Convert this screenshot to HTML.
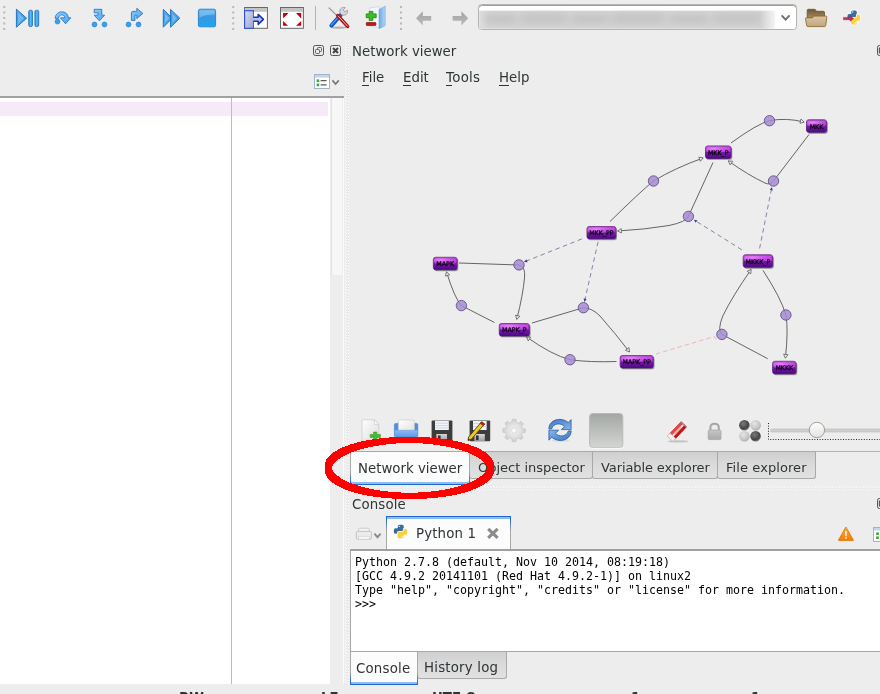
<!DOCTYPE html>
<html>
<head>
<meta charset="utf-8">
<title>Network viewer</title>
<style>
html,body{margin:0;padding:0;background:#ededed;}
body{width:880px;height:694px;overflow:hidden;background:#ededed;position:relative;font-family:"DejaVu Sans","Liberation Sans",sans-serif;font-size:13.33px;color:#2e3436;}
.abs{position:absolute;}
.t{will-change:transform;position:absolute;white-space:nowrap;line-height:16px;height:16px;}
.t u{text-decoration:none;border-bottom:1px solid #2e3436;padding-bottom:0px;}
.sv{font-weight:bold;}
.tab{position:absolute;box-sizing:border-box;border:1px solid #a9a9a9;border-top-color:#aaa;background:linear-gradient(#cfcfcf,#dadada 45%,#e1e1e1);}
.tab.on{background:#fcfcfc;border-color:#a9a9a9;}
#ed{left:0;top:98px;width:330px;height:586px;background:#fff;}
#edtop{left:0;top:96px;width:344px;height:2px;background:#a1a1a1;}
#hl{left:0;top:102px;width:328px;height:14px;background:#f6e9f8;}
#edge{left:231px;top:98px;width:1px;height:586px;background:#bdbdbd;}
#sf{left:331px;top:98px;width:11px;height:177px;background:#f7f7f7;border-left:1px solid #e2e2e2;box-sizing:border-box}
#con{left:350px;top:549px;width:540px;height:103px;background:#fff;border:1px solid #a8a8a8;border-top:2px solid #a0a0a0;box-sizing:border-box;}
#con pre{will-change:transform;margin:0;position:absolute;left:4px;top:4px;font-family:"DejaVu Sans Mono","Liberation Mono",monospace;font-size:11.63px;line-height:14px;color:#000;}
</style>
</head>
<body>
<!-- left editor pane -->
<div class="abs" id="edtop"></div>
<div class="abs" id="ed"></div>
<div class="abs" id="hl"></div>
<div class="abs" id="edge"></div>
<div class="abs" id="sf"></div>

<!-- titles and menus -->
<div class="t" style="left:352px;top:44px;">Network viewer</div>
<div class="t" style="left:362px;top:70px;"><u>F</u>ile</div>
<div class="t" style="left:403px;top:70px;"><u>E</u>dit</div>
<div class="t" style="left:446px;top:70px;letter-spacing:.3px"><u>T</u>ools</div>
<div class="t" style="left:499px;top:70px;"><u>H</u>elp</div>

<!-- dock tabs -->
<div class="abs" style="left:350px;top:451px;width:530px;height:1px;background:#b2b2b2"></div>
<div class="tab" style="left:469px;top:451px;width:124px;height:28px;border-radius:0 0 3px 3px"></div>
<div class="tab" style="left:592px;top:451px;width:126px;height:28px;border-radius:0 0 3px 3px"></div>
<div class="tab" style="left:717px;top:451px;width:99px;height:28px;border-radius:0 0 3px 3px"></div>
<div class="tab on" style="left:350px;top:451px;width:120px;height:34px;border-bottom:1px solid #1c6ad2;box-shadow:inset 0 -2px 0 #8fbcee;border-radius:0 0 3px 3px;border-image:linear-gradient(#a9a9a9 60%,#1c6ad2 95%) 1;"></div>
<div class="t" style="left:358px;top:461px;">Network viewer</div>
<div class="t" style="left:477.6px;top:460px;font-size:13px;letter-spacing:0px">Object inspector</div>
<div class="t" style="left:600.5px;top:460px;font-size:13px;letter-spacing:-.1px">Variable explorer</div>
<div class="t" style="left:725.8px;top:460px;font-size:13px;letter-spacing:.08px">File explorer</div>

<!-- console -->
<div class="t" style="left:352px;top:497px;letter-spacing:.15px">Console</div>
<div class="tab on" style="left:386px;top:516px;width:125px;height:34px;border-top:1px solid #1c6ad2;border-bottom:none;box-shadow:inset 0 2px 0 #8fbcee;border-image:linear-gradient(#1c6ad2 8%,#a9a9a9 45%) 1;"></div>
<div class="t" style="left:415.8px;top:526px;letter-spacing:.15px">Python 1</div>
<div class="abs" id="con"><pre>Python 2.7.8 (default, Nov 10 2014, 08:19:18)
[GCC 4.9.2 20141101 (Red Hat 4.9.2-1)] on linux2
Type "help", "copyright", "credits" or "license" for more information.
&gt;&gt;&gt; </pre></div>
<div class="tab" style="left:417px;top:651px;width:89.5px;height:28px;border-radius:0 0 3px 3px"></div>
<div class="tab on" style="left:350px;top:652px;width:68px;height:33px;border-top:none;border-bottom:1px solid #1c6ad2;box-shadow:inset 0 -2px 0 #8fbcee;border-image:linear-gradient(#a9a9a9 60%,#1c6ad2 95%) 1;"></div>
<div class="t" style="left:356.4px;top:661px;letter-spacing:.2px">Console</div>
<div class="t" style="left:424.4px;top:660px;letter-spacing:.2px">History log</div>

<!-- status bar -->
<div class="t sl" style="left:96px;top:694px;">Permissions:</div><div class="t sv" style="left:179px;top:690px;">RW</div>
<div class="t sl" style="left:236px;top:694px;">End-of-lines:</div><div class="t sv" style="left:321px;top:690px;">LF</div>
<div class="t sl" style="left:372px;top:694px;">Encoding:</div><div class="t sv" style="left:432px;top:690px;">UTF-8</div>
<div class="t sl" style="left:598px;top:694px;">Line:</div><div class="t sv" style="left:631px;top:690px;">1</div>
<div class="t sl" style="left:694px;top:694px;">Column:</div><div class="t sv" style="left:751px;top:690px;">1</div>

<!-- SVG overlay: splitters, icons, graph -->
<svg class="abs" id="ov" style="left:0;top:0;will-change:transform" width="880" height="694" viewBox="0 0 880 694">
<defs>
<marker id="ao" viewBox="0 0 7 7" markerWidth="7" markerHeight="7" refX="4.6" refY="3.5" orient="auto" markerUnits="userSpaceOnUse"><path d="M1,1.3 L4.8,3.5 L1,5.7 Z" fill="#ededed" stroke="#555" stroke-width="0.7"/></marker>
<marker id="ab" viewBox="0 0 6 6" markerWidth="4.2" markerHeight="4.2" refX="4.5" refY="3" orient="auto" markerUnits="userSpaceOnUse"><path d="M0.5,0.8 L5.2,3 L0.5,5.2 Z" fill="#3b3b96" stroke="none"/></marker>
<linearGradient id="ng" x1="0" y1="0" x2="0" y2="1"><stop offset="0" stop-color="#c34fe2"/><stop offset=".46" stop-color="#a92fd2"/><stop offset=".52" stop-color="#7c18b2"/><stop offset="1" stop-color="#4b0a82"/></linearGradient>
<radialGradient id="nh" cx=".3" cy=".35" r=".6"><stop offset="0" stop-color="#ee8cff" stop-opacity=".9"/><stop offset="1" stop-color="#d25fee" stop-opacity=".35"/></radialGradient>
<linearGradient id="bl" x1="0" y1="0" x2="0" y2="1"><stop offset="0" stop-color="#62b0ee"/><stop offset=".5" stop-color="#4299e4"/><stop offset="1" stop-color="#4cbcf9"/></linearGradient>
<linearGradient id="blv" x1="0" y1="0" x2="1" y2="0"><stop offset="0" stop-color="#2f86d8"/><stop offset=".5" stop-color="#56c2fa"/><stop offset="1" stop-color="#2f86d8"/></linearGradient>
<linearGradient id="stp" x1="0" y1="0" x2="0" y2="1"><stop offset="0" stop-color="#5cb2f0"/><stop offset=".45" stop-color="#3a96de"/><stop offset="1" stop-color="#19a8f8"/></linearGradient>
<linearGradient id="pnl" x1="0" y1="0" x2="1" y2="1"><stop offset="0" stop-color="#d4daee"/><stop offset="1" stop-color="#9aa3cf"/></linearGradient>
<linearGradient id="fld" x1="0" y1="0" x2="1" y2="0"><stop offset="0" stop-color="#6fa8e4"/><stop offset="1" stop-color="#b4d6f8"/></linearGradient>
<linearGradient id="gry" x1="0" y1="0" x2="0" y2="1"><stop offset="0" stop-color="#a2a2a2"/><stop offset="1" stop-color="#bcbcbc"/></linearGradient>
<linearGradient id="tan" x1="0" y1="0" x2="0" y2="1"><stop offset="0" stop-color="#d8c6a4"/><stop offset="1" stop-color="#bfa780"/></linearGradient>
<linearGradient id="blur" x1="0" y1="0" x2="1" y2="0"><stop offset="0" stop-color="#dedede"/><stop offset=".03" stop-color="#d3d3d3"/><stop offset=".95" stop-color="#d3d3d3"/><stop offset="1" stop-color="#f4f4f4"/></linearGradient>
<filter id="bf" x="-10%" y="-50%" width="120%" height="200%"><feGaussianBlur stdDeviation="4 2.5"/></filter>
<pattern id="dots" x="345" y="40" width="4" height="3" patternUnits="userSpaceOnUse"><rect width="4" height="3" fill="#ebebeb"/><rect x="0" y="0" width="1" height="1" fill="#fcfcfc"/><rect x="1" y="1" width="1" height="1" fill="#fcfcfc"/><rect x="3" y="1" width="1" height="1" fill="#fcfcfc"/></pattern>
<pattern id="dotsh" x="349" y="486" width="3" height="4" patternUnits="userSpaceOnUse"><rect width="3" height="4" fill="#ebebeb"/><rect x="0" y="0" width="1" height="1" fill="#fcfcfc"/><rect x="1" y="1" width="1" height="1" fill="#fcfcfc"/><rect x="1" y="3" width="1" height="1" fill="#fcfcfc"/></pattern>
<linearGradient id="wrn" x1="0" y1="0" x2="0" y2="1"><stop offset="0" stop-color="#fbb040"/><stop offset="1" stop-color="#f57900"/></linearGradient>
<linearGradient id="ppr" x1="0" y1="0" x2="1" y2="1"><stop offset="0" stop-color="#fdfdfd"/><stop offset="1" stop-color="#dedede"/></linearGradient>
<linearGradient id="ppr2" x1="0" y1="0" x2="1" y2="1"><stop offset="0" stop-color="#ffffff"/><stop offset="1" stop-color="#e4e4e4"/></linearGradient>
<linearGradient id="prb" x1="0" y1="0" x2="0" y2="1"><stop offset="0" stop-color="#8cb8f4"/><stop offset="1" stop-color="#5d9be9"/></linearGradient>
<linearGradient id="mtl" x1="0" y1="0" x2="0" y2="1"><stop offset="0" stop-color="#d8d8d8"/><stop offset="1" stop-color="#9c9c9c"/></linearGradient>
<radialGradient id="ggr" cx="0" cy="0" r="11.5" gradientUnits="userSpaceOnUse"><stop offset="0" stop-color="#f2f2f2"/><stop offset=".6" stop-color="#e0e0e0"/><stop offset="1" stop-color="#cdcdcd"/></radialGradient>
<linearGradient id="rf1" x1="0" y1="0" x2="1" y2="1"><stop offset="0" stop-color="#3f78c4"/><stop offset=".5" stop-color="#5f95d6"/><stop offset="1" stop-color="#8db6e6"/></linearGradient>
<linearGradient id="gbt" x1="0" y1="0" x2="0" y2="1"><stop offset="0" stop-color="#a3a7a3"/><stop offset="1" stop-color="#d3d5d3"/></linearGradient>
<linearGradient id="lck" x1="0" y1="0" x2="0" y2="1"><stop offset="0" stop-color="#c6c6c6"/><stop offset="1" stop-color="#a9a9a9"/></linearGradient>
<radialGradient id="bdk" cx=".4" cy=".35" r=".7"><stop offset="0" stop-color="#7a7a7a"/><stop offset=".7" stop-color="#444"/><stop offset="1" stop-color="#8a8a8a"/></radialGradient>
<radialGradient id="blt" cx=".4" cy=".35" r=".7"><stop offset="0" stop-color="#e6e6e6"/><stop offset=".7" stop-color="#c4c4c4"/><stop offset="1" stop-color="#a8a8a8"/></radialGradient>
<linearGradient id="knb" x1="0" y1="0" x2="0" y2="1"><stop offset="0" stop-color="#ffffff"/><stop offset="1" stop-color="#e2e2e0"/></linearGradient>
<linearGradient id="bl2" x1="0" y1="0" x2="1" y2="1"><stop offset="0" stop-color="#8ccefa"/><stop offset="1" stop-color="#4aa4ee"/></linearGradient>
<linearGradient id="fbk" x1="0" y1="0" x2="0" y2="1"><stop offset="0" stop-color="#6e5632"/><stop offset="1" stop-color="#a38c62"/></linearGradient>
</defs>
<!--GRAPH-->
<g id="graph" fill="none" stroke="#555" stroke-width="0.9">
<g stroke="#77779f" stroke-dasharray="4.5 3.5">
<path d="M759.6,248.4 L771.8,187.5" marker-end="url(#ab)"/>
<path d="M741.8,249.8 L694.2,220" marker-end="url(#ab)"/>
<path d="M581.9,238.9 L524.4,261.8" marker-end="url(#ab)"/>
<path d="M598.1,241.8 L584.5,301.5" marker-end="url(#ab)"/>
</g>
<path d="M656,354 L714.5,336.5 l1.8,3.2" stroke="#f3aaaa" stroke-dasharray="4.5 3"/>
<path d="M610,221.5 Q640,192 653.5,181 Q675,168 703,158" marker-end="url(#ao)"/>
<path d="M731,143 Q757,124 769.5,120.7 Q786,117.5 804,122" marker-end="url(#ao)"/>
<path d="M809,134.5 L773.5,181 Q770,185.5 765,183 Q748,175 728.5,161" marker-end="url(#ao)"/>
<path d="M713,162.5 L688.4,216.4 Q686,222 669,225.5 Q645,229.5 617.8,231" marker-end="url(#ao)"/>
<path d="M459,263 L519,265 Q525.5,266.5 524.6,277 Q523,295 516.8,319.2" marker-end="url(#ao)"/>
<path d="M494.5,322.5 L461.4,305.6 Q455,299 446.5,272" marker-end="url(#ao)"/>
<path d="M532,323 L583.4,307.7 Q592,308 600,316 Q615,333 629.4,351.8" marker-end="url(#ao)"/>
<path d="M616.5,361.5 Q590,362.5 570,359.7 Q552,355 526.6,337" marker-end="url(#ao)"/>
<path d="M763,270.4 Q781,298 785.9,315 Q788.5,330 785.4,358" marker-end="url(#ao)"/>
<path d="M767.7,358.7 L722,334.4 Q717,330 722.9,315.8 Q732,297 751,269.6" marker-end="url(#ao)"/>
<g fill="#a78bd2" fill-opacity="0.85" stroke="#62528a" stroke-width="0.9">
<circle cx="769.5" cy="120.7" r="5.2"/><circle cx="653.5" cy="181" r="5.2"/><circle cx="773.5" cy="181" r="5.2"/><circle cx="688.4" cy="216.4" r="5.2"/>
<circle cx="519" cy="264.9" r="5.2"/><circle cx="461.4" cy="305.6" r="5.2"/><circle cx="583.4" cy="307.7" r="5.2"/><circle cx="570" cy="359.7" r="5.2"/>
<circle cx="785.9" cy="315" r="5.2"/><circle cx="721.9" cy="334.4" r="5.2"/>
</g>
</g>
<g id="nodes" font-family="'DejaVu Sans','Liberation Sans',sans-serif" font-size="6.3" text-anchor="middle" fill="#0c0212" stroke="#0c0212" stroke-width=".28" paint-order="stroke">
<g transform="translate(806.5,119.8)"><rect x="1" y="1.2" width="20" height="12.4" rx="2.2" fill="#6b6b6b" opacity=".75"/><rect width="20" height="12.4" rx="2.2" fill="url(#ng)" stroke="#47105f" stroke-width=".8"/><rect x=".6" y=".6" width="18.8" height="6" rx="1.8" fill="url(#nh)"/><text x="10" y="8.8">MKK</text></g>
<g transform="translate(705.5,146.0)"><rect x="1" y="1.2" width="25.5" height="12.4" rx="2.2" fill="#6b6b6b" opacity=".75"/><rect width="25.5" height="12.4" rx="2.2" fill="url(#ng)" stroke="#47105f" stroke-width=".8"/><rect x=".6" y=".6" width="24.3" height="6" rx="1.8" fill="url(#nh)"/><text x="12.7" y="8.8">MKK_P</text></g>
<g transform="translate(587,226.5)"><rect x="1" y="1.2" width="28.8" height="12.2" rx="2.2" fill="#6b6b6b" opacity=".75"/><rect width="28.8" height="12.2" rx="2.2" fill="url(#ng)" stroke="#47105f" stroke-width=".8"/><rect x=".6" y=".6" width="27.6" height="5.8" rx="1.8" fill="url(#nh)"/><text x="14.4" y="8.8">MKK_PP</text></g>
<g transform="translate(743.2,254.8)"><rect x="1" y="1.2" width="29.4" height="12.4" rx="2.2" fill="#6b6b6b" opacity=".75"/><rect width="29.4" height="12.4" rx="2.2" fill="url(#ng)" stroke="#47105f" stroke-width=".8"/><rect x=".6" y=".6" width="28.2" height="6" rx="1.8" fill="url(#nh)"/><text x="14.7" y="8.8">MKKK_P</text></g>
<g transform="translate(772.6,361.3)"><rect x="1" y="1.2" width="23.4" height="12.4" rx="2.2" fill="#6b6b6b" opacity=".75"/><rect width="23.4" height="12.4" rx="2.2" fill="url(#ng)" stroke="#47105f" stroke-width=".8"/><rect x=".6" y=".6" width="22.2" height="6" rx="1.8" fill="url(#nh)"/><text x="11.7" y="8.8">MKKK</text></g>
<g transform="translate(433.4,257.3)"><rect x="1" y="1.2" width="23.6" height="12.4" rx="2.2" fill="#6b6b6b" opacity=".75"/><rect width="23.6" height="12.4" rx="2.2" fill="url(#ng)" stroke="#47105f" stroke-width=".8"/><rect x=".6" y=".6" width="22.4" height="6" rx="1.8" fill="url(#nh)"/><text x="11.8" y="8.8">MAPK</text></g>
<g transform="translate(499.3,323.5)"><rect x="1" y="1.2" width="30" height="12.4" rx="2.2" fill="#6b6b6b" opacity=".75"/><rect width="30" height="12.4" rx="2.2" fill="url(#ng)" stroke="#47105f" stroke-width=".8"/><rect x=".6" y=".6" width="28.8" height="6" rx="1.8" fill="url(#nh)"/><text x="15" y="8.8">MAPK_P</text></g>
<g transform="translate(620.2,355.5)"><rect x="1" y="1.2" width="33" height="12.4" rx="2.2" fill="#6b6b6b" opacity=".75"/><rect width="33" height="12.4" rx="2.2" fill="url(#ng)" stroke="#47105f" stroke-width=".8"/><rect x=".6" y=".6" width="31.8" height="6" rx="1.8" fill="url(#nh)"/><text x="16.5" y="8.8">MAPK_PP</text></g>
</g>
<!--/GRAPH-->
<!--ICONS-->
<g id="tb-top">
<!-- toolbar handles -->
<g fill="#bab8b0"><rect x="3.2" y="6" width="2" height="2"/><rect x="3.2" y="11.5" width="2" height="2"/><rect x="3.2" y="17" width="2" height="2"/><rect x="3.2" y="22.5" width="2" height="2"/><rect x="3.2" y="28" width="2" height="2"/>
<rect x="232.2" y="6" width="2" height="2"/><rect x="232.2" y="11.5" width="2" height="2"/><rect x="232.2" y="17" width="2" height="2"/><rect x="232.2" y="22.5" width="2" height="2"/><rect x="232.2" y="28" width="2" height="2"/>
<rect x="400" y="6" width="2" height="2"/><rect x="400" y="11.5" width="2" height="2"/><rect x="400" y="17" width="2" height="2"/><rect x="400" y="22.5" width="2" height="2"/><rect x="400" y="28" width="2" height="2"/></g>
<!-- debug play/pause -->
<path d="M16.4,9.2 L26.6,18.2 L16.4,27.2 Z" fill="url(#bl)" stroke="#2670be" stroke-width="1" stroke-linejoin="round"/>
<path d="M18.2,13 L24,18.2 L18.2,23.4 Z" fill="#7ccaf8" opacity=".7"/>
<rect x="28.7" y="10.2" width="3.8" height="16.4" rx="1.5" fill="url(#blv)" stroke="#2670be" stroke-width=".8"/>
<rect x="34.9" y="10.2" width="3.8" height="16.4" rx="1.5" fill="url(#blv)" stroke="#2670be" stroke-width=".8"/>
<!-- step over -->
<path d="M55.2,18.4 C55.4,10 67.6,9.6 68.4,17.8 L70.8,17.8 L65.6,23.8 L60.4,17.8 L64.8,17.8 C64.4,13.6 58.6,14 58.4,18.4 Z" fill="url(#bl2)" stroke="#2a76c6" stroke-width=".9" stroke-linejoin="round"/>
<circle cx="57.5" cy="21.6" r="2.4" fill="#33a5f2" stroke="#2a78c4" stroke-width=".7"/>
<!-- step into -->
<path d="M94.2,9.3 L101.8,9.3 L101.8,15.2 L104.6,15.2 L99.4,20.8 L94.2,15.2 L98,15.2 L98,12.8 L94.2,12.8 Z" fill="url(#bl2)" stroke="#2a76c6" stroke-width=".9" stroke-linejoin="round"/>
<circle cx="94.5" cy="24.5" r="2.4" fill="#2ea6f5" stroke="#2a78c4" stroke-width=".7"/><circle cx="104.5" cy="24.5" r="2.4" fill="#2ea6f5" stroke="#2a78c4" stroke-width=".7"/>
<!-- step out -->
<path d="M131.4,20.4 L131.4,13 Q131.4,11.4 133,11.4 L136.8,11.4 L136.8,8.3 L142.9,13.4 L136.8,18.6 L136.8,15.2 L135,15.2 L135,20.4 Z" fill="url(#bl2)" stroke="#2a76c6" stroke-width=".9" stroke-linejoin="round"/>
<circle cx="128.5" cy="24.5" r="2.4" fill="#2ea6f5" stroke="#2a78c4" stroke-width=".7"/><circle cx="138.5" cy="24.5" r="2.4" fill="#2ea6f5" stroke="#2a78c4" stroke-width=".7"/>
<!-- continue -->
<path d="M163.3,9.4 L172.2,18.2 L163.3,27.2 Z" fill="url(#bl)" stroke="#2670be" stroke-width="1" stroke-linejoin="round"/>
<path d="M170.6,9.4 L179.8,18.2 L170.6,27.2 Z" fill="url(#bl)" stroke="#2670be" stroke-width="1" stroke-linejoin="round"/>
<path d="M165,14 L169.4,18.2 L165,22.6 Z M172.4,14 L176.8,18.2 L172.4,22.6 Z" fill="#8fd3fa" opacity=".6"/>
<!-- stop -->
<rect x="198.4" y="9.2" width="17.2" height="17.6" rx="1.6" fill="url(#stp)" stroke="#2d7ccb" stroke-width=".9"/>
<path d="M199.4,17.5 Q206,14.2 214.6,14.6 L214.6,10.2 L199.4,10.2 Z" fill="#8fd0f8" opacity=".55"/>
<!-- window w/ arrow -->
<rect x="244.6" y="7.5" width="22.8" height="20.8" fill="#fff" stroke="#666" stroke-width="1"/>
<rect x="245.1" y="8" width="21.8" height="3.8" fill="#c4c4c4"/>
<rect x="244.6" y="10.7" width="8.8" height="17.6" fill="url(#pnl)" stroke="#2b4fe0" stroke-width="1.1"/>
<path d="M252.8,17.3 L258.2,17.3 L258.2,14.4 L263.4,19.4 L258.2,24.4 L258.2,21.3 L252.8,21.3" fill="#b9c0e4" stroke="#1634b6" stroke-width="1.5" stroke-linejoin="round"/>
<rect x="246" y="12" width="7.2" height="15.2" fill="url(#pnl)"/>
<!-- fullscreen -->
<rect x="280.5" y="7.5" width="22.9" height="20.8" fill="#fff" stroke="#666" stroke-width="1"/>
<rect x="281" y="8" width="21.9" height="3.8" fill="#c4c4c4"/>
<path d="M283.1,13 L288.5,13 L283.1,18.5 Z M296,13 L301.2,13 L301.2,18.5 Z M283.1,20.9 L283.1,25.8 L288,25.8 Z M301.2,20.9 L301.2,25.8 L296,25.8 Z" fill="#c40000"/>
<!-- separator -->
<rect x="315" y="6" width="1" height="24" fill="#b4b4b4"/>
<!-- tools -->
<ellipse cx="339" cy="27.6" rx="7.5" ry="1.1" fill="#9a9a9a" opacity=".7"/>
<path d="M329.3,8 L337.6,16" stroke="#8a8a8a" stroke-width="1.6" stroke-linecap="round"/>
<path d="M329.3,7.6 L337.6,15.6" stroke="#e8e8e8" stroke-width=".7" stroke-linecap="round"/>
<path d="M340.6,15.2 L331.4,25.6" stroke="#0c52c8" stroke-width="4" stroke-linecap="round"/>
<path d="M340,15.4 L331.4,25" stroke="#4c97f0" stroke-width="1.4" stroke-linecap="round"/>
<path d="M337.8,15.6 L347.6,26.4" stroke="#b40c0c" stroke-width="3.6" stroke-linecap="round"/>
<path d="M338.2,16 L347.4,26" stroke="#f6d0d0" stroke-width=".9" stroke-linecap="round"/>
<path d="M340.6,13.8 C338.2,10.2 341.4,6.4 345.2,7.6 L343.2,10 L344.8,11.8 L347.6,10.2 C348.4,14 344.4,16.4 341.8,14.8 Z" fill="#d8d8d8" stroke="#8c8c8c" stroke-width=".7"/>
<!-- folder plus/minus -->
<path d="M369.6,7.8 L379.8,6.8 L379.8,27.6 L369.6,26.2 Z" fill="#f2f6fb" stroke="#c3cdd8" stroke-width=".6"/>
<path d="M379,9.4 L385.2,6.2 L385.2,25.6 L379,28.8 Z" fill="url(#fld)" stroke="#76a8dc" stroke-width=".6"/>
<path d="M369.2,13.4 L369.2,11.4 L372.8,11.4 L372.8,13.9 L376.2,13.9 L376.2,17.7 L372.8,17.7 L372.8,20.4 L369.2,20.4 L369.2,17.7 L366.2,17.7 L366.2,13.9 L369.2,13.9 Z" fill="#3bbd27" stroke="#1f7d12" stroke-width=".8" stroke-linejoin="round"/>
<rect x="366.3" y="22.5" width="9.6" height="3" rx=".6" fill="#c8141a" stroke="#861010" stroke-width=".7"/>
<!-- back / forward -->
<path d="M416,18.2 L422.8,11.2 L422.8,16 L431.2,16 L431.2,20.8 L422.8,20.8 L422.8,25.4 Z" fill="url(#gry)"/>
<path d="M468.2,18.2 L461.4,11.2 L461.4,16 L452.6,16 L452.6,20.8 L461.4,20.8 L461.4,25.4 Z" fill="url(#gry)"/>
<!-- combobox -->
<rect x="478.5" y="4.5" width="318" height="25" rx="3" fill="#fff" stroke="#b6b2ad" stroke-width="1"/>
<path d="M479.5,7.5 Q479.5,5.5 481.5,5.5 L793.5,5.5 Q795.5,5.5 795.5,7.5" fill="none" stroke="#9e9e9e" stroke-width="1"/>
<rect x="479.2" y="10.7" width="296" height="18" fill="url(#blur)"/>
<g filter="url(#bf)" fill="#c2c2c2" opacity=".75"><rect x="486" y="14" width="30" height="10"/><rect x="522" y="13" width="44" height="11"/><rect x="572" y="14" width="36" height="10"/><rect x="612" y="13" width="52" height="11"/><rect x="670" y="14" width="38" height="10"/><rect x="714" y="13" width="46" height="11"/></g>
<path d="M781.6,15.4 L785.6,19.6 L789.6,15.4" fill="none" stroke="#6e6e6e" stroke-width="1.9"/>
<!-- open folder -->
<path d="M807.2,10.4 Q807.2,9.3 808.4,9.3 L814.4,9.3 Q815.4,9.3 815.8,10.2 L816.3,11.3 L823.3,11.3 Q824.5,11.3 824.5,12.5 L824.5,18 L807.2,18 Z" fill="url(#fbk)" stroke="#6b4f22" stroke-width=".8"/>
<path d="M805.5,18.9 Q805.3,17.8 806.5,17.8 L812.4,17.8 L814,16.1 L825.8,16.1 Q827,16.1 826.8,17.3 L825.7,25.6 Q825.5,26.6 824.3,26.6 L807.9,26.6 Q806.9,26.6 806.7,25.6 Z" fill="url(#tan)" stroke="#875f22" stroke-width=".8" stroke-linejoin="round"/>
<!-- python w/ arrow -->
<g id="pylogo"><g stroke="#fafafa" stroke-width="1.6" stroke-linejoin="round" paint-order="stroke">
<path d="M851.2,14 L851.2,12 Q851.2,10.4 852.8,10.4 L855.2,10.4 Q856.8,10.4 856.8,12 L856.8,15.6 Q856.8,17.2 855.2,17.2 L852.6,17.2 Q851,17.2 851,18.8 L851,19.8 L849,19.8 Q847.4,19.8 847.4,17.4 L847.4,16.4 Q847.4,14 849,14 Z" fill="#3a6c9f"/>
<path d="M856.6,20.8 L856.6,23 Q856.6,24.6 855,24.6 L852.6,24.6 Q851,24.6 851,23 L851,19.4 Q851,17.8 852.6,17.8 L855.2,17.8 Q856.8,17.8 856.8,16.2 L856.8,14.8 L858.6,14.8 Q860.2,14.8 860.2,17.2 L860.2,18.4 Q860.2,20.8 858.6,20.8 Z" fill="#f7d23a"/>
</g>
<circle cx="852.7" cy="12" r=".7" fill="#e8eef5"/><circle cx="855.2" cy="23" r=".7" fill="#fff8d8"/></g>
<path d="M843.4,17.4 L850.2,17.4 L850.2,15.8 L853.6,18.6 L850.2,21.4 L850.2,19.8 L843.4,19.8 Z" fill="#b83260" stroke="#8f2448" stroke-width=".4"/>
</g>
<g id="misc">
<!-- splitters -->
<rect x="343" y="98" width="1" height="586" fill="#fbfbfb"/>
<rect x="345" y="40" width="4" height="645" fill="url(#dots)"/>
<rect x="349" y="486" width="531" height="4" fill="url(#dotsh)"/>
<!-- dock buttons (editor) -->
<g fill="none" stroke="#555753" stroke-width="1">
<rect x="313.5" y="45.5" width="10" height="10" rx="1.8"/>
<rect x="317.5" y="47.5" width="4" height="4" rx=".8" stroke-width=".9"/><rect x="315.5" y="49.5" width="4" height="4" rx=".8" fill="#ededed" stroke-width=".9"/>
<rect x="330.5" y="45.5" width="10" height="10" rx="1.8"/>
<path d="M333,48 L338,53 M338,48 L333,53" stroke-width="2" stroke="#444"/>
<rect x="877.5" y="45.5" width="10" height="10" rx="1.8"/><rect x="879.3" y="48" width="4" height="5" fill="#555"/>
<rect x="877.5" y="498.5" width="10" height="10" rx="1.8"/><rect x="879.3" y="501" width="4" height="5" fill="#555"/>
</g>
<!-- options icon (editor) -->
<rect x="314.5" y="74.5" width="15" height="14" fill="#fff" stroke="#9fb4cc" stroke-width="1"/>
<rect x="315" y="75" width="14" height="2.6" fill="#c6d6ea"/>
<rect x="316.6" y="79.4" width="2.6" height="2.6" fill="#3aa53a"/><rect x="316.6" y="83.6" width="2.6" height="2.6" fill="#3aa53a"/>
<rect x="320.6" y="80.2" width="6" height="1" fill="#333"/><rect x="320.6" y="84.4" width="6" height="1" fill="#333"/>
<path d="M332.4,80.4 L335.6,84 L338.8,80.4" fill="none" stroke="#777" stroke-width="1.6"/>
<!-- options icon (console, cut by edge) -->
<rect x="873.5" y="527.5" width="15" height="14" fill="#fff" stroke="#9fb4cc" stroke-width="1"/>
<rect x="874" y="528" width="14" height="2.6" fill="#c6d6ea"/>
<rect x="876.2" y="532.4" width="2.6" height="2.6" fill="#3aa53a"/><rect x="876.2" y="536.4" width="2.6" height="2.6" fill="#3aa53a"/>
<!-- warning -->
<path d="M845.9,527 L853.4,540 Q853.6,540.6 853,540.6 L838.9,540.6 Q838.3,540.6 838.5,540 Z" fill="url(#wrn)" stroke="#d6760a" stroke-width=".8" stroke-linejoin="round"/>
<rect x="845.2" y="531.2" width="1.5" height="5" fill="#fff"/><rect x="845.2" y="537.2" width="1.5" height="1.5" fill="#fff"/>
</g>
<g id="nvtb">
<!-- new doc -->
<path d="M362,419.8 L374.4,419.8 L378.8,424.6 L378.8,441 L362,441 Z" fill="url(#ppr)" stroke="#c9c9c9" stroke-width=".7"/>
<path d="M374.4,419.8 L374.4,424.6 L378.8,424.6 Z" fill="#fafafa" stroke="#c4c4c4" stroke-width=".6"/>
<path d="M373.6,432 L376.8,432 L376.8,434.4 L380.4,434.4 L380.4,437.4 L376.8,437.4 L376.8,440 L373.6,440 L373.6,437.4 L370.2,437.4 L370.2,434.4 L373.6,434.4 Z" fill="#47b82f" stroke="#3a9a27" stroke-width=".6"/>
<!-- print -->
<rect x="394.4" y="423.4" width="23.4" height="13.6" rx="1.4" fill="#4f8fe2" stroke="#3f7fd6" stroke-width=".6"/>
<rect x="394.8" y="430.4" width="22.6" height="6.4" fill="url(#prb)"/>
<path d="M398.4,421 Q398.4,420 399.4,420 L413.4,420 Q414.4,420 414.4,421 L414.4,430 L398.4,430 Z" fill="url(#ppr2)" stroke="#c8c8c8" stroke-width=".6"/>
<!-- save -->
<rect x="431.6" y="420.4" width="20.8" height="20.8" rx="1" fill="#3d3d3d"/>
<rect x="435" y="420.8" width="13.8" height="9.2" fill="#f2f5fa"/>
<rect x="435" y="422.6" width="13.8" height="1.1" fill="#cfdaea"/><rect x="435" y="425" width="13.8" height="1.1" fill="#cfdaea"/><rect x="435" y="427.4" width="13.8" height="1.1" fill="#cfdaea"/>
<rect x="436.4" y="434" width="10.6" height="7" fill="url(#mtl)"/><rect x="438" y="435.4" width="2.6" height="4.8" fill="#333"/>
<!-- save as -->
<rect x="469.6" y="420.6" width="20.6" height="20.6" rx="1" fill="#3d3d3d"/>
<rect x="473" y="421" width="13.6" height="9" fill="#f2f5fa"/><rect x="473" y="423" width="13.6" height="1.1" fill="#cfdaea"/><rect x="473" y="426" width="13.6" height="1.1" fill="#cfdaea"/>
<rect x="474.4" y="434" width="10.4" height="7" fill="url(#mtl)"/><rect x="476" y="435.4" width="2.6" height="4.8" fill="#333"/>
<path d="M481.6,421.8 L484.6,424 L471.4,439.2 L468,440.6 L468.6,437 Z" fill="#f0c81e" stroke="#3a3000" stroke-width=".8" stroke-linejoin="round"/>
<path d="M481.6,421.8 L484.6,424 L483.2,425.6 L480.2,423.4 Z" fill="#d2161e" stroke="#7a0d12" stroke-width=".5"/>
<path d="M468,440.6 L468.4,438.6 L469.8,439.8 Z" fill="#222"/>
<!-- gear (disabled) -->
<g transform="translate(514.1,430.5)" fill="url(#ggr)" stroke="#c4c4c4" stroke-width=".6">
<path d="M-1.9,-11.2 L1.9,-11.2 L2.5,-8.2 L4.6,-7.3 L7.1,-9 L9.4,-6.6 L7.6,-4.2 L8.4,-2.2 L11.3,-1.6 L11.3,1.8 L8.4,2.4 L7.5,4.5 L9.2,7 L6.8,9.3 L4.4,7.6 L2.4,8.4 L1.8,11.3 L-1.8,11.3 L-2.4,8.4 L-4.5,7.5 L-7,9.2 L-9.3,6.8 L-7.6,4.4 L-8.4,2.4 L-11.3,1.8 L-11.3,-1.8 L-8.4,-2.4 L-7.5,-4.5 L-9.2,-7 L-6.8,-9.3 L-4.4,-7.6 L-2.4,-8.4 Z"/>
<circle r="2.6" fill="#f8f8f8" stroke="#cfcfcf"/>
</g>
<!-- refresh -->
<ellipse cx="560.5" cy="440.6" rx="9" ry="1.2" fill="#d9d9d9"/>
<path id="rfa" d="M548.8,428.9 C549,421.4 556.6,418.4 562,419.6 C565,420.2 567,421.4 568.2,422.6 L571.1,419.6 L571.1,429.6 L561.3,429.6 L564.5,426.6 C561.5,422.8 553.5,422.6 551.6,428.9 Z" fill="url(#rf1)" stroke="#2b5ea6" stroke-width=".8" stroke-linejoin="round"/>
<use href="#rfa" transform="rotate(180 560 429.9)"/>
<!-- grey button -->
<rect x="589.6" y="413.5" width="33.2" height="34" rx="3.2" fill="url(#gbt)" stroke="#b9bbb9" stroke-width="1"/>
<path d="M591,448.3 L621.4,448.3" stroke="#fafafa" stroke-width="1"/>
<!-- eraser -->
<ellipse cx="678" cy="441.4" rx="10.4" ry="1.2" fill="#c4c4c4"/>
<g transform="translate(670.1,438.8) rotate(-46.4)"><rect x="0" y="-4" width="20.2" height="8" rx=".8" fill="#cf0d0d"/><rect x="3.8" y="-4" width="16.4" height="3" fill="#e24a4a"/><rect x="3.8" y="-1.1" width="15.4" height="2.1" fill="#f8ecec"/><rect x="6.5" y="-.5" width="9" height="1" fill="#e59a9a"/><rect x="0" y="-4" width="4" height="8" rx=".8" fill="#f0f0f0" stroke="#c6c6c6" stroke-width=".5"/><rect x="19.2" y="-4" width="1.1" height="8" fill="#8c8c8c"/></g>
<!-- lock -->
<path d="M710.4,430.4 L710.4,427.6 Q710.4,423.8 714.6,423.8 Q718.8,423.8 718.8,427.6 L718.8,430.4" fill="none" stroke="#a6a6a6" stroke-width="2"/>
<rect x="708.2" y="430" width="12.8" height="9.6" rx="1.2" fill="url(#lck)" stroke="#a3a3a3" stroke-width=".7"/>
<!-- balls -->
<circle cx="744.4" cy="425.2" r="5.3" fill="url(#bdk)"/><circle cx="755.6" cy="425.2" r="5.3" fill="url(#blt)"/>
<circle cx="744.4" cy="436.2" r="5.3" fill="url(#blt)"/><circle cx="755.6" cy="436.2" r="5.3" fill="url(#bdk)"/>
<!-- slider -->
<path d="M768.5,423 L768.5,439.5 L880,439.5" fill="none" stroke="#222" stroke-width="1" stroke-dasharray="1 1.6"/>
<rect x="770.5" y="429" width="120" height="3" rx="1.5" fill="#cfcfcf" stroke="#b8b8b8" stroke-width=".6"/>
<circle cx="816.9" cy="430" r="7.7" fill="url(#knb)" stroke="#a29d92" stroke-width="1"/>
</g>
<g id="contb">
<!-- disabled printer-ish icon + chevron -->
<rect x="358.6" y="528.2" width="10.6" height="4.5" rx="1" fill="#f4f4f4" stroke="#c2c2c2" stroke-width=".8"/>
<rect x="356.4" y="531.4" width="15" height="7.8" rx="1.2" fill="#ececec" stroke="#bdbdbd" stroke-width=".9"/>
<rect x="358.4" y="536.2" width="11" height="3" fill="#f6f6f6" stroke="#c8c8c8" stroke-width=".5"/>
<path d="M374.4,533.6 L377.5,537.2 L380.6,533.6" fill="none" stroke="#8a8a80" stroke-width="1.9"/>
<!-- python icon -->
<use href="#pylogo" transform="translate(393.8,524.8) scale(1.055,.95) translate(-847.4,-10.4)"/>
<!-- close x -->
<path d="M488.2,528.8 L497.6,537.8 M497.6,528.8 L488.2,537.8" stroke="#8b8b8b" stroke-width="3.1" stroke-linecap="butt"/>
</g>
<!--/ICONS-->
<!--ELLIPSE-->
<path d="M406.45,436.80 L412.55,436.80 A81.45,28.05 0 0 1 494.00,464.85 L494.00,470.95 A81.45,28.05 0 0 1 412.55,499.00 L406.45,499.00 A81.45,28.05 0 0 1 325.00,470.95 L325.00,464.85 A81.45,28.05 0 0 1 406.45,436.80 Z M409.50,442.92 A81.45,28.05 0 0 1 487.42,467.90 A81.45,28.05 0 0 1 409.50,492.88 A81.45,28.05 0 0 1 331.58,467.90 A81.45,28.05 0 0 1 409.50,442.92 Z" fill="#fd0000" fill-rule="evenodd" shape-rendering="crispEdges"/>
</svg>
</body>
</html>
